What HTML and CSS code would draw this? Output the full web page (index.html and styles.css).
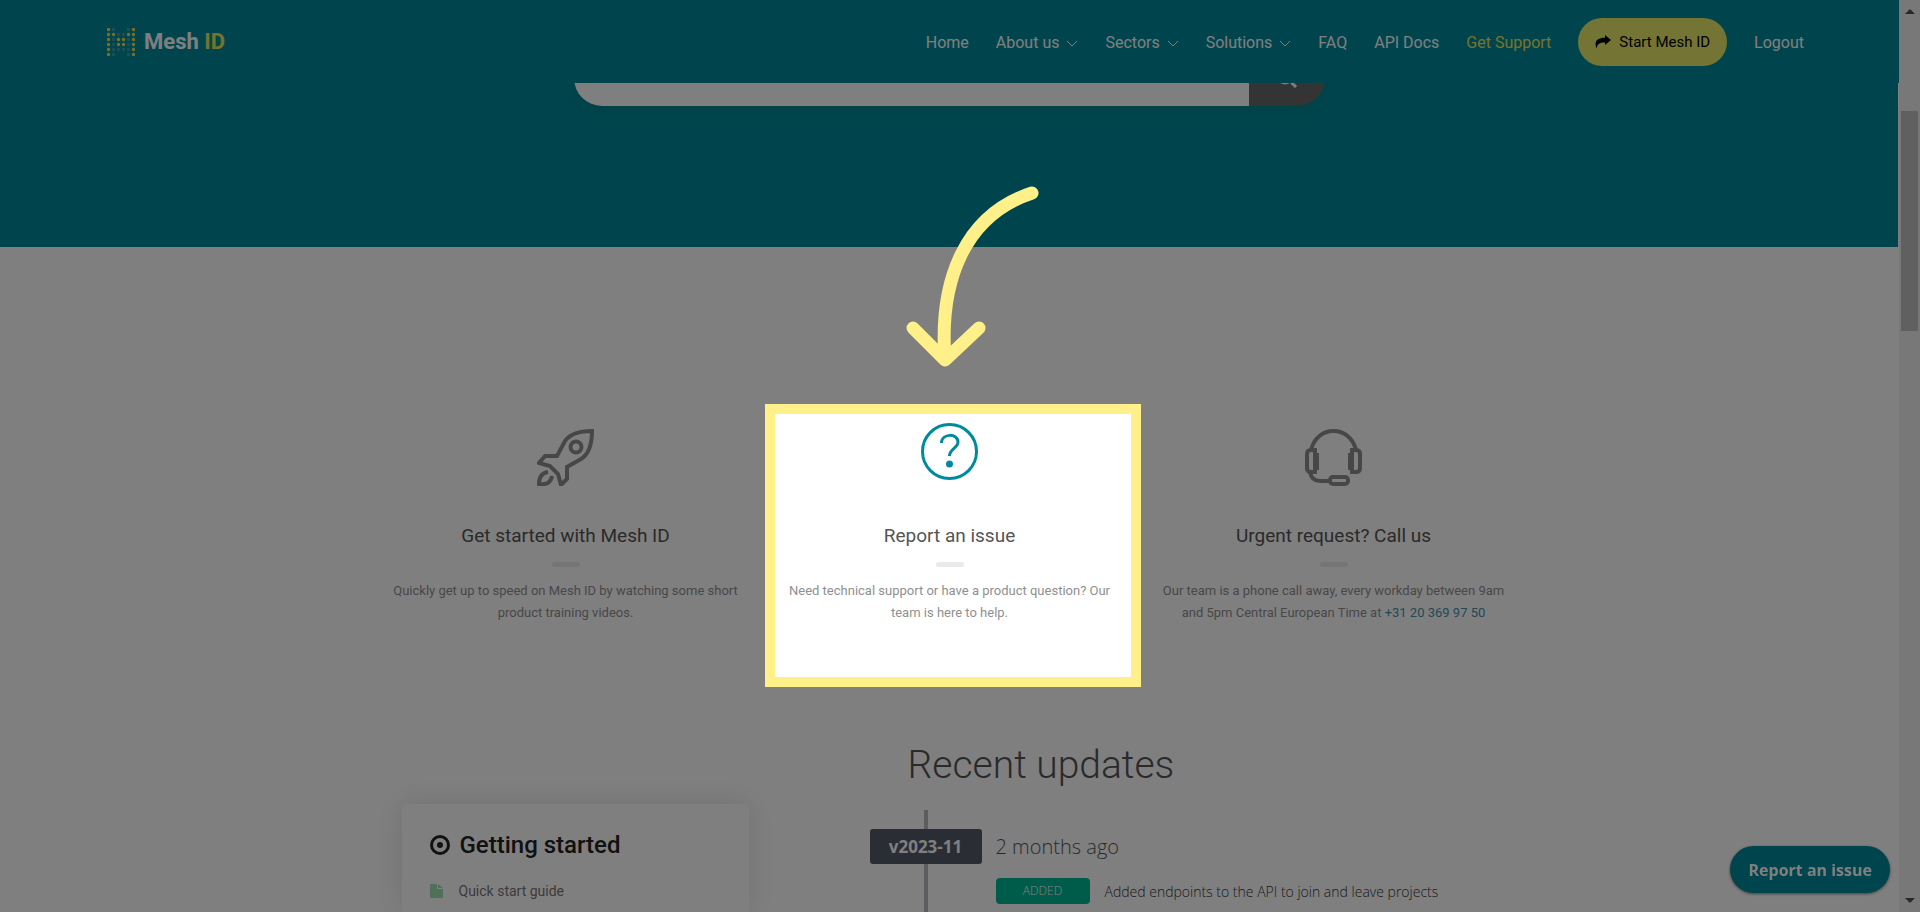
FILE: index.html
```html
<!DOCTYPE html>
<html lang="en">
<head>
    <meta charset="UTF-8">
    <meta name="viewport" content="width=device-width, initial-scale=1.0">
    <title>Mesh ID - Get Support</title>
    <link rel="stylesheet" href="styles.css">
</head>
<body>
    <div class="page">
        <header class="header">
            <a class="logo" href="#">
                <svg class="logo-mark" width="28" height="28" viewBox="0 0 28 28" stroke-width="3.5" stroke-linecap="round">
                    <g stroke="#3f9aa6">
                        <path d="M6.500 1.500h0M6.500 11.500h0M6.500 16.500h0M6.500 21.500h0M6.500 26.500h0M21.500 1.500h0M21.500 11.500h0M21.500 16.500h0M21.500 21.500h0M21.500 26.500h0M11.500 6.500h0M16.500 6.500h0M11.500 21.500h0M16.500 21.500h0"/>
                    </g>
                    <g stroke="#f0dc50">
                        <path d="M1.500 1.500h0M1.500 6.500h0M1.500 11.500h0M1.500 16.500h0M1.500 21.500h0M1.500 26.500h0M26.500 1.500h0M26.500 6.500h0M26.500 11.500h0M26.500 16.500h0M26.500 21.500h0M26.500 26.500h0M6.500 6.500h0M21.500 6.500h0M11.500 11.500h0M16.500 11.500h0M11.500 16.500h0M16.500 16.500h0"/>
                    </g>
                </svg>
                <span>Mesh <span class="yellow">ID</span></span>
            </a>
            <nav class="nav">
                <a href="#">Home</a>
                <a href="#">About us <svg class="chevron" viewBox="0 0 12 8"><path d="M1 1l5 5 5-5"/></svg></a>
                <a href="#">Sectors <svg class="chevron" viewBox="0 0 12 8"><path d="M1 1l5 5 5-5"/></svg></a>
                <a href="#">Solutions <svg class="chevron" viewBox="0 0 12 8"><path d="M1 1l5 5 5-5"/></svg></a>
                <a href="#">FAQ</a>
                <a href="#">API Docs</a>
                <a href="#" class="yellow">Get Support</a>
                <a href="#" class="start-button">
                    <svg width="16" height="14" viewBox="0 0 16 14"><path d="M10 0l6 5-6 5V7.500C5 7.300 2.500 8.500 1.500 13.500 -1 7 1.500 2.800 10 2.800z"/></svg>
                    Start Mesh ID
                </a>
                <a href="#">Logout</a>
            </nav>
        </header>

        <section class="hero">
            <form class="search">
                <input type="search" aria-label="Search">
                <button type="button" aria-label="Search">
                    <svg width="22" height="22" viewBox="0 0 22 22"><circle cx="9" cy="10" r="7"/><path d="M14 15l6 6"/></svg>
                </button>
            </form>
        </section>

        <section class="features">
            <div class="feature">
                <svg class="feature-icon" viewBox="0 0 57 57">
                    <path d="M55 2C42 2 33 5 28 12L20 27H8L2 34l11 3 8 8 3 11 6-6V38l14-8C52 25 55 16 55 2z"/>
                    <circle cx="39" cy="18" r="5.500"/>
                    <path d="M11 43c-7 1-9 6-9 12 7 1 12-1 13-8"/>
                </svg>
                <h3>Get started with Mesh ID</h3>
                <span class="divider"></span>
                <p>Quickly get up to speed on Mesh ID by watching some short product training videos.</p>
            </div>
            <div class="feature active">
                <svg class="feature-icon" viewBox="0 0 57 57">
                    <circle cx="28.500" cy="28.500" r="27"/>
                    <path d="M20.500 20c0-10 16.500-10 16.500-1 0 6-8.500 7-8.500 14"/>
                    <circle class="dot" cx="28.500" cy="41" r="3.500"/>
                </svg>
                <h3>Report an issue</h3>
                <span class="divider"></span>
                <p>Need technical support or have a product question? Our team is here to help.</p>
                <div class="spotlight">
                    <svg class="arrow" viewBox="0 0 146 195">
                        <path d="M132 13C65 35 39 100 45 179M13 148l32 32 34-32"/>
                    </svg>
                </div>
            </div>
            <div class="feature">
                <svg class="feature-icon" viewBox="0 0 57 57">
                    <path d="M6 21C9 9 18 2 28.500 2S48 9 51 21"/>
                    <path d="M10 21H6q-4 0-4 4v14q0 4 4 4h4zM47 21h4q4 0 4 4v14q0 4-4 4h-4z"/>
                    <path d="M12 24v17M45 24v17M5 43c1 6 5 9 10 9h10"/>
                    <rect x="25" y="48" width="18" height="7" rx="3"/>
                </svg>
                <h3>Urgent request? Call us</h3>
                <span class="divider"></span>
                <p>Our team is a phone call away, every workday between 9am and 5pm Central European Time at <a href="tel:+31203699750">+31 20 369 97 50</a></p>
            </div>
        </section>

        <section class="content">
            <div class="guide-card">
                <h2>
                    <svg width="20" height="20" viewBox="0 0 20 20"><circle cx="10" cy="10" r="8.500" fill="none" stroke="#222" stroke-width="3"/><circle cx="10" cy="10" r="3" fill="#222"/></svg>
                    Getting started
                </h2>
                <a href="#" class="guide-link">
                    <svg width="13" height="14" viewBox="0 0 13 14"><path d="M0 0h7v5h6v9H0zM8 0l5 4H8z"/></svg>
                    Quick start guide
                </a>
            </div>
            <div class="updates">
                <h2>Recent updates</h2>
                <div class="timeline">
                    <span class="version">v2023-11</span>
                    <div class="release">
                        <h4>2 months ago</h4>
                        <div class="change"><span class="tag">ADDED</span>Added endpoints to the API to join and leave projects</div>
                    </div>
                </div>
            </div>
        </section>

        <button class="report-button" type="button">Report an issue</button>
    </div>

    <div class="scrollbar">
        <svg width="10" height="5" viewBox="0 0 10 5"><path d="M0 5l5-5 5 5z"/></svg>
        <div class="track"><div class="thumb"></div></div>
        <svg width="10" height="5" viewBox="0 0 10 5"><path d="M0 0l5 5 5-5z"/></svg>
    </div>
</body>
</html>
```

FILE: styles.css
```css
* {
    margin: 0;
    padding: 0;
    box-sizing: border-box;
}

body {
    font-family: Roboto, "Liberation Sans", sans-serif;
    background: #fff;
    color: #555;
    display: flex;
    height: 100vh;
    overflow: hidden;
}

a {
    text-decoration: none;
    color: inherit;
}

.page {
    flex: 1;
    position: relative;
    display: flex;
    flex-direction: column;
}

.yellow {
    color: #ebe65a;
}

/* header */
.header {
    position: absolute;
    top: 0;
    left: 0;
    right: 0;
    z-index: 2;
    height: 83px;
    padding: 0 95px 0 107px;
    background: #008a9a;
    display: flex;
    justify-content: space-between;
    align-items: center;
    color: #fff;
}

.logo {
    display: flex;
    align-items: center;
    gap: 9px;
    font-size: 22px;
    font-weight: 700;
}

.logo-mark {
    fill: none;
}

.nav {
    display: flex;
    align-items: center;
    gap: 27px;
    padding-top: 1px;
    font-size: 16px;
}

.chevron {
    width: 12px;
    height: 8px;
    margin-left: 3px;
    fill: none;
    stroke: #fff;
}

.start-button {
    display: flex;
    align-items: center;
    gap: 8px;
    height: 48px;
    padding: 0 17px;
    border-radius: 24px;
    background: #e8ea6a;
    color: #000;
    font-size: 15px;
}

/* search */
.hero {
    height: 247px;
    margin-right: 1px;
    padding-top: 48px;
    background: #008a9a;
}

.search {
    display: flex;
    width: 751px;
    height: 58px;
    margin: 0 auto;
    border-radius: 28px;
    overflow: hidden;
    box-shadow: 0 6px 20px rgba(0, 0, 0, 0.06);
}

.search input {
    flex: 1;
    border: none;
    background: #fff;
}

.search button {
    width: 76px;
    border: none;
    background: #686868;
    display: flex;
    align-items: center;
    justify-content: center;
}

.search svg {
    fill: none;
    stroke: #fff;
    stroke-width: 3;
}

/* features */
.features {
    display: flex;
    width: 100%;
    max-width: 1152px;
    margin: 0 auto;
    padding-top: 182px;
}

.feature {
    flex: 1;
    position: relative;
    padding: 0 16px;
    text-align: center;
}

.feature-icon {
    display: block;
    width: 57px;
    height: 57px;
    margin: 0 auto 38px;
    fill: none;
    stroke: #8f8f8f;
    stroke-width: 4;
}

/* icon lifts on hover */
.active .feature-icon {
    margin-top: -6px;
    margin-bottom: 44px;
    stroke: #008a9e;
    stroke-width: 3;
}

.dot {
    fill: #008a9e;
    stroke: none;
}

.feature h3 {
    font-size: 19px;
    font-weight: 400;
    line-height: 24px;
}

.divider {
    display: block;
    width: 28px;
    height: 5px;
    margin: 14px auto 13px;
    border-radius: 3px;
    background: #eaeaea;
}

.feature p {
    font-size: 13px;
    line-height: 22px;
    color: #909090;
}

.feature p a {
    color: #4a90ac;
}

.spotlight {
    position: absolute;
    z-index: 10;
    top: -25px;
    left: 7px;
    right: 1px;
    height: 283px;
    border: 10px solid #fff08a;
    box-shadow: 0 0 0 9999px rgba(0, 0, 0, 0.5);
}

.arrow {
    position: absolute;
    left: 125px;
    bottom: 302px;
    width: 146px;
    height: 195px;
    fill: none;
    stroke: #fff08a;
    stroke-width: 13;
    stroke-linecap: round;
    stroke-linejoin: round;
}

/* guides and updates */
.content {
    flex: 1;
    display: flex;
    justify-content: space-between;
    width: 100%;
    max-width: 1152px;
    margin: 0 auto;
    padding: 118px 1px 0 28px;
}

.guide-card {
    width: 347px;
    margin-top: 62px;
    padding: 26px 28px 0;
    background: #fff;
    border-radius: 4px 4px 0 0;
    box-shadow: 0 0 30px rgba(0, 0, 0, 0.12);
}

.guide-card h2 {
    display: flex;
    align-items: center;
    gap: 10px;
    font-size: 24px;
    font-weight: 500;
    line-height: 30px;
    color: #222;
}

.guide-link {
    display: flex;
    align-items: center;
    gap: 16px;
    margin-top: 19px;
    font-size: 14px;
    line-height: 24px;
    color: #777;
}

.guide-link svg {
    fill: #a2e0b4;
}

.updates {
    display: flex;
    flex-direction: column;
    width: 655px;
}

.updates h2 {
    margin-left: 38px;
    font-size: 39px;
    font-weight: 300;
    line-height: 46px;
}

.timeline {
    flex: 1;
    display: flex;
    align-items: flex-start;
    gap: 14px;
    position: relative;
    margin-top: 22px;
    padding-top: 19px;
    font-family: "Open Sans", sans-serif;
}

.timeline::before {
    content: "";
    position: absolute;
    top: 0;
    bottom: 0;
    left: 54px;
    width: 4px;
    background: #b8b8c2;
}

.version {
    position: relative;
    width: 112px;
    border-radius: 3px;
    background: #575b6b;
    color: #fff;
    font-size: 17px;
    font-weight: 700;
    line-height: 35px;
    text-align: center;
}

.release h4 {
    font-size: 20px;
    font-weight: 300;
    line-height: 36px;
}

.change {
    display: flex;
    align-items: center;
    gap: 15px;
    margin-top: 13px;
    font-size: 14px;
    font-weight: 300;
    color: #333;
}

.tag {
    width: 94px;
    border-radius: 4px;
    background: #00b894;
    color: #fff;
    font-size: 12px;
    line-height: 26px;
    text-align: center;
}

.report-button {
    position: fixed;
    right: 30px;
    bottom: 19px;
    height: 47px;
    padding: 0 18px;
    border: none;
    border-radius: 24px;
    background: #008a9a;
    box-shadow: 0 1px 3px rgba(0, 0, 0, 0.5);
    color: #fff;
    font-family: "Open Sans", sans-serif;
    font-size: 16px;
    font-weight: 700;
}

/* scrollbar */
.scrollbar {
    width: 21px;
    padding: 9px 2px;
    background: #f1f1f1;
    display: flex;
    flex-direction: column;
    align-items: center;
    fill: #505050;
}

.track {
    flex: 1;
    align-self: stretch;
    padding-top: 97px;
}

.thumb {
    height: 220px;
    background: #c1c1c1;
}
```
